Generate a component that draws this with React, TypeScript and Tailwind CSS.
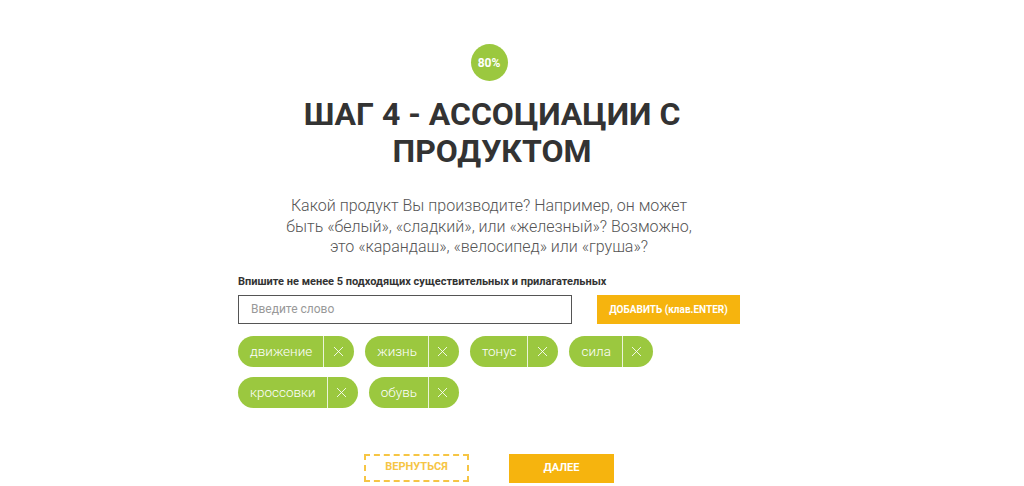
import React, { useState } from 'react';

const initialTags = ['движение', 'жизнь', 'тонус', 'сила', 'кроссовки', 'обувь'];

const CloseIcon = () => (
  <svg width="11" height="11" viewBox="0 0 11 11" fill="none">
    <path d="M1 1L10 10M10 1L1 10" stroke="white" strokeWidth="1" strokeOpacity="0.85" />
  </svg>
);

export default function App() {
  const [tags, setTags] = useState<string[]>(initialTags);
  const [value, setValue] = useState('');

  const addTag = () => {
    const word = value.trim();
    if (!word) return;
    setTags([...tags, word]);
    setValue('');
  };

  const removeTag = (index: number) => {
    setTags(tags.filter((_, i) => i !== index));
  };

  return (
    <div
      className="min-h-[486px] w-full bg-white pr-[46px]"
      style={{ fontFamily: 'Roboto, "Liberation Sans", sans-serif' }}
    >
      <div className="mx-auto flex w-[502px] flex-col items-center pt-[44px]">
        <div className="flex h-[37px] w-[37px] items-center justify-center rounded-full bg-[#9bc83f] text-[12px] font-bold text-white">
          80%
        </div>

        <h1 className="mt-[15px] w-[420px] pl-[6px] text-center text-[32px] font-bold uppercase leading-[37px] text-[#333333]">
          Шаг 4 - Ассоциации с продуктом
        </h1>

        <p className="mt-[26px] w-[410px] text-center text-[16px] font-light leading-[20.5px] text-[#555555]">
          Какой продукт Вы производите? Например, он может быть «белый», «сладкий», или «железный»? Возможно, это
          «карандаш», «велосипед» или «груша»?
        </p>

        <div className="mt-[17px] w-full">
          <div className="text-[11px] font-bold leading-[14px] text-[#333333]">
            Впишите не менее 5 подходящих существительных и прилагательных
          </div>

          <div className="mt-[6px] flex items-center gap-[25px]">
            <input
              value={value}
              onChange={(e) => setValue(e.target.value)}
              onKeyDown={(e) => e.key === 'Enter' && addTag()}
              placeholder="Введите слово"
              className="h-[29px] w-[334px] border border-[#555555] px-[12px] text-[12px] text-[#333333] outline-none placeholder:text-[#999999]"
            />
            <button
              onClick={addTag}
              className="h-[29px] w-[143px] bg-[#f6b40e] text-[10px] font-bold text-white"
            >
              ДОБАВИТЬ (клав.ENTER)
            </button>
          </div>

          <div className="mt-[12px] flex w-[440px] flex-wrap gap-x-[11px] gap-y-[10px]">
            {tags.map((tag, i) => (
              <div
                key={tag + i}
                className="flex h-[31px] items-center rounded-full bg-[#9bc83f] text-[13.5px] font-light text-white"
              >
                <span className="pl-[12px] pr-[11px]">{tag}</span>
                <button
                  onClick={() => removeTag(i)}
                  className="flex h-full w-[31px] items-center justify-center border-l border-white/80 pr-[2px]"
                >
                  <CloseIcon />
                </button>
              </div>
            ))}
          </div>
        </div>

        <div className="mt-[46px] flex gap-[40px]">
          <button className="h-[28px] w-[105px] border-2 border-dashed border-[#f6c544] text-[11px] font-bold text-[#f6c544]">
            ВЕРНУТЬСЯ
          </button>
          <button className="h-[29px] w-[105px] bg-[#f6b40e] text-[11px] font-bold text-white">ДАЛЕЕ</button>
        </div>
      </div>
    </div>
  );
}
